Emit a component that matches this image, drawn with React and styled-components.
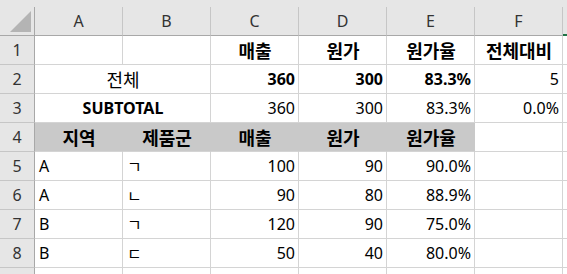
import React from 'react';
import styled, { createGlobalStyle } from 'styled-components';

const GlobalStyle = createGlobalStyle`
  html, body {
    margin: 0;
    padding: 0;
    background: #ffffff;
  }
  body {
    font-family: "Noto Sans", "Noto Sans CJK KR", sans-serif;
    overflow: hidden;
  }
`;

const Frame = styled.div`
  width: 567px;
  height: 274px;
  overflow: hidden;
  background: #e6e6e6;
  padding-top: 7px;
  box-sizing: border-box;
`;

const Sheet = styled.div`
  display: grid;
  grid-template-columns: 35px repeat(6, 88px) 1fr;
  grid-auto-rows: 29px;
  background: #ffffff;
`;

const Corner = styled.div`
  background: #e6e6e6;
  border-right: 1px solid #a8a8a8;
  border-bottom: 1px solid #a8a8a8;
  box-sizing: border-box;
  display: flex;
  align-items: flex-end;
  justify-content: flex-end;
  padding: 0 2px 2px 0;
`;

const ColHead = styled.div`
  background: #e6e6e6;
  color: #333;
  font-size: 16px;
  display: flex;
  align-items: center;
  justify-content: center;
  box-sizing: border-box;
  border-right: 1px solid #c6c6c6;
  border-bottom: ${(p) => (p.$active ? '2px solid #217346' : '1px solid #a8a8a8')};
`;

const RowHead = styled.div`
  background: #e6e6e6;
  color: #333;
  font-size: 16px;
  display: flex;
  align-items: center;
  justify-content: center;
  box-sizing: border-box;
  border-right: 1px solid #a8a8a8;
  border-bottom: 1px solid #c6c6c6;
`;

const Cell = styled.div`
  grid-column: span ${(p) => p.$span || 1};
  display: flex;
  align-items: center;
  justify-content: ${(p) =>
    p.$align === 'right' ? 'flex-end' : p.$align === 'center' ? 'center' : 'flex-start'};
  padding: 0 3px 0 4px;
  box-sizing: border-box;
  font-size: ${(p) => (p.$ko ? '18px' : '16px')};
  font-weight: ${(p) => (p.$bold ? 700 : 400)};
  color: #000;
  white-space: nowrap;
  overflow: hidden;
  background: ${(p) => (p.$fill ? '#c9c9c9' : '#ffffff')};
  border-right: 1px solid ${(p) => (p.$fill ? '#c9c9c9' : '#d4d4d4')};
  border-bottom: 1px solid #d4d4d4;
`;

const cols = ['A', 'B', 'C', 'D', 'E', 'F', ''];

const rows = [
  [
    { t: '' },
    { t: '' },
    { t: '매출', a: 'center', b: true, k: true },
    { t: '원가', a: 'center', b: true, k: true },
    { t: '원가율', a: 'center', b: true, k: true },
    { t: '전체대비', a: 'center', b: true, k: true },
  ],
  [
    { t: '전체', a: 'center', s: 2, k: true },
    { t: '360', a: 'right', b: true },
    { t: '300', a: 'right', b: true },
    { t: '83.3%', a: 'right', b: true },
    { t: '5', a: 'right' },
  ],
  [
    { t: 'SUBTOTAL', a: 'center', b: true, s: 2 },
    { t: '360', a: 'right' },
    { t: '300', a: 'right' },
    { t: '83.3%', a: 'right' },
    { t: '0.0%', a: 'right' },
  ],
  [
    { t: '지역', a: 'center', b: true, f: true, k: true },
    { t: '제품군', a: 'center', b: true, f: true, k: true },
    { t: '매출', a: 'center', b: true, f: true, k: true },
    { t: '원가', a: 'center', b: true, f: true, k: true },
    { t: '원가율', a: 'center', b: true, f: true, k: true },
    { t: '' },
  ],
  [{ t: 'A' }, { t: 'ㄱ' }, { t: '100', a: 'right' }, { t: '90', a: 'right' }, { t: '90.0%', a: 'right' }, { t: '' }],
  [{ t: 'A' }, { t: 'ㄴ' }, { t: '90', a: 'right' }, { t: '80', a: 'right' }, { t: '88.9%', a: 'right' }, { t: '' }],
  [{ t: 'B' }, { t: 'ㄱ' }, { t: '120', a: 'right' }, { t: '90', a: 'right' }, { t: '75.0%', a: 'right' }, { t: '' }],
  [{ t: 'B' }, { t: 'ㄷ' }, { t: '50', a: 'right' }, { t: '40', a: 'right' }, { t: '80.0%', a: 'right' }, { t: '' }],
  [{ t: '' }, { t: '' }, { t: '' }, { t: '' }, { t: '' }, { t: '' }],
];

function App() {
  return (
    <>
      <GlobalStyle />
      <Frame>
        <Sheet>
          {/* 왼쪽 위 모서리 */}
          <Corner>
            <svg width="22" height="22" viewBox="0 0 22 22">
              <polygon points="0,21 21,21 21,0" fill="#b4b4b4" />
            </svg>
          </Corner>
          {cols.map((c, i) => (
            <ColHead key={i} $active={i === 6}>
              {c}
            </ColHead>
          ))}

          {rows.map((row, r) => (
            <React.Fragment key={r}>
              {/* 9행은 화면 아래에 잘려 번호가 보이지 않음 */}
              <RowHead>{r < 8 ? r + 1 : ''}</RowHead>
              {row.map((cell, i) => (
                <Cell
                  key={i}
                  $align={cell.a}
                  $bold={cell.b}
                  $fill={cell.f}
                  $span={cell.s}
                  $ko={cell.k}
                >
                  {cell.t}
                </Cell>
              ))}
              <Cell />
            </React.Fragment>
          ))}
        </Sheet>
      </Frame>
    </>
  );
}

export default App;
